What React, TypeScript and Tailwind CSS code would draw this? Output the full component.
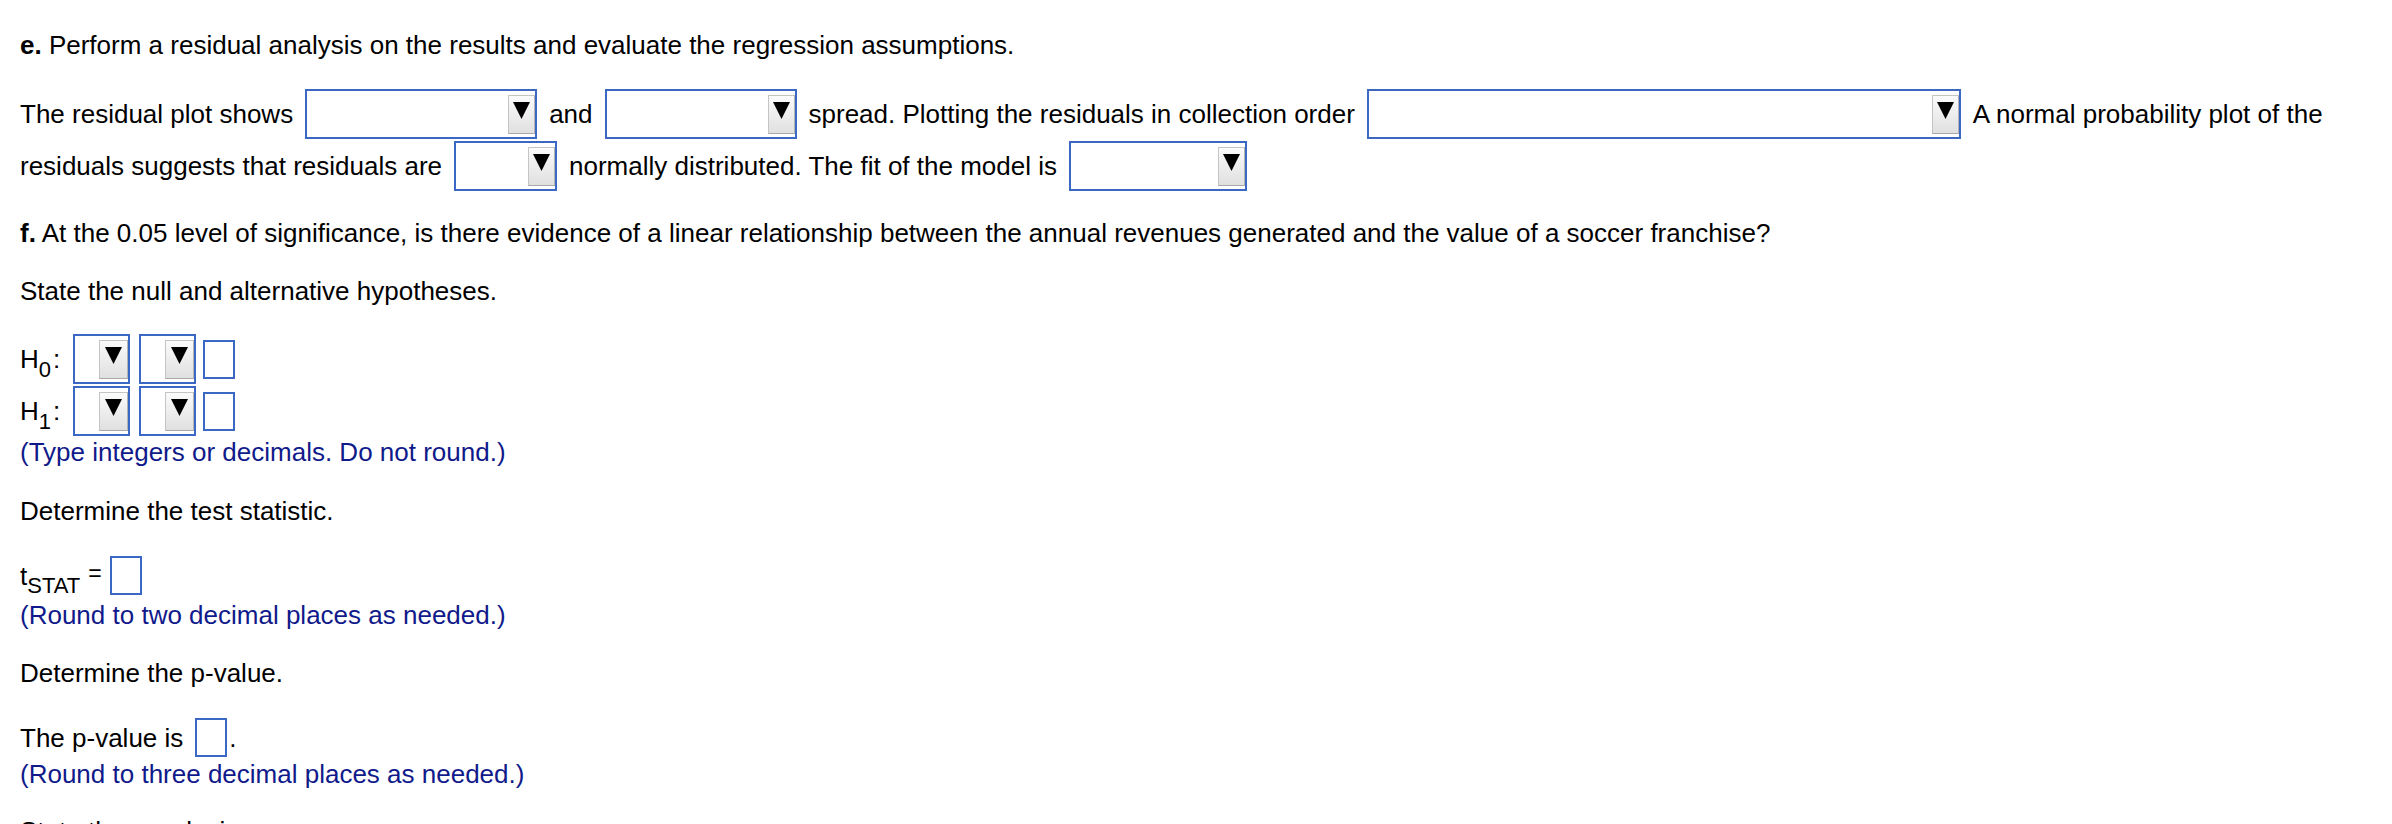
import type { ReactNode } from 'react'

// blue answer boxes + the little grey drop-down button
const boxBorder = 'border-2 border-[#3a68c4]'

function Arrow() {
  return (
    <svg width="17" height="17" viewBox="0 0 17 17" className="block">
      <polygon points="0,0 17,0 8.5,17" fill="#000" />
    </svg>
  )
}

function Drop({ className, btn = 'w-[27px]' }: { className: string; btn?: string }) {
  return (
    <span className={`flex h-[50px] shrink-0 items-center justify-end ${boxBorder} ${className}`}>
      <span
        className={`flex h-[39px] justify-center border border-[#c4c4c4] border-b-[#a9a9a9] border-r-[#b4b4b4] bg-linear-to-b from-[#fbfbfb] to-[#e0e0e0] pt-[6px] ${btn}`}
      >
        <Arrow />
      </span>
    </span>
  )
}

function Blank() {
  return <span className={`block h-[39px] w-[32px] shrink-0 ${boxBorder}`} />
}

function Txt({ children }: { children: ReactNode }) {
  return <span className="whitespace-nowrap leading-[32px]">{children}</span>
}

function Hint({ children, className = '' }: { children: ReactNode; className?: string }) {
  return <p className={`leading-[32px] text-[#101a8a] ${className}`}>{children}</p>
}

function HypRow({ n, className = '' }: { n: string; className?: string }) {
  return (
    <div className={`flex h-[50px] items-center ${className}`}>
      <span className="w-[53px] shrink-0 whitespace-nowrap leading-[32px]">
        H<span className="relative top-[9px] text-[22px] leading-none">{n}</span>
        <span className="ml-[2px]">:</span>
      </span>
      <Drop className="w-[57px]" btn="w-[29px]" />
      <Drop className="ml-[9px] w-[57px]" btn="w-[29px]" />
      <span className="ml-[7px]">
        <Blank />
      </span>
    </div>
  )
}

export default function App() {
  return (
    <div className="min-h-screen bg-white pl-5 pt-[29px] font-['Liberation_Sans',Arial,sans-serif] text-[26px] text-black">
      <p className="leading-[32px]">
        <b>e.</b> Perform a residual analysis on the results and evaluate the regression assumptions.
      </p>

      <div className="mt-[28px] flex h-[50px] items-center gap-3">
        <Txt>The residual plot shows</Txt>
        <Drop className="w-[232px]" />
        <Txt>and</Txt>
        <Drop className="w-[192px]" />
        <Txt>spread. Plotting the residuals in collection order</Txt>
        <Drop className="w-[594px]" />
        <Txt>A normal probability plot of the</Txt>
      </div>
      <div className="mt-[2px] flex h-[50px] items-center gap-3">
        <Txt>residuals suggests that residuals are</Txt>
        <Drop className="w-[103px]" />
        <Txt>normally distributed. The fit of the model is</Txt>
        <Drop className="w-[178px]" />
      </div>

      <p className="mt-[26px] leading-[32px]">
        <b>f.</b> At the 0.05 level of significance, is there evidence of a linear relationship between the annual
        revenues generated and the value of a soccer franchise?
      </p>
      <p className="mt-[26px] leading-[32px]">State the null and alternative hypotheses.</p>

      <HypRow n="0" className="mt-[27px]" />
      <HypRow n="1" className="mt-[2px]" />
      <Hint>(Type integers or decimals. Do not round.)</Hint>

      <p className="mt-[27px] leading-[32px]">Determine the test statistic.</p>
      <div className="mt-[29px] flex h-[39px] items-center">
        <span className="whitespace-nowrap leading-[32px]">
          t<span className="relative top-[8px] text-[22px] leading-none">STAT</span>
        </span>
        <span className="relative -top-[3px] ml-[8px] text-[23px] leading-[32px]">=</span>
        <span className="ml-[8px]">
          <Blank />
        </span>
      </div>
      <Hint className="mt-[4px]">(Round to two decimal places as needed.)</Hint>

      <p className="mt-[26px] leading-[32px]">Determine the p-value.</p>
      <div className="mt-[29px] flex h-[39px] items-center">
        <Txt>The p-value is</Txt>
        <span className="ml-3">
          <Blank />
        </span>
        <span className="ml-[2px] leading-[32px]">.</span>
      </div>
      <Hint className="mt-[1px]">(Round to three decimal places as needed.)</Hint>

      <p className="mt-[25px] leading-[32px]">State the conclusion.</p>
    </div>
  )
}
